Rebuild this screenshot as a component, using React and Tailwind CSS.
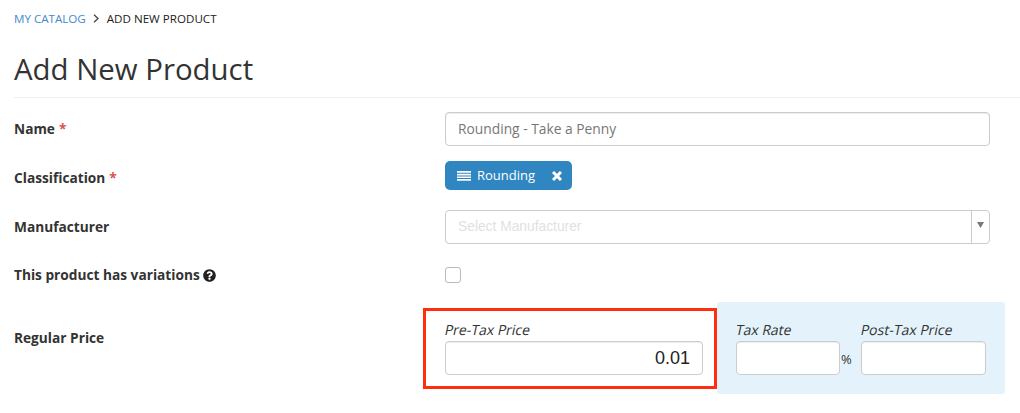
import { FaQuestionCircle } from 'react-icons/fa'

const labelClass = "w-[431px] shrink-0 text-[13.7px] font-bold text-[#333]"
const inputClass = "h-[34px] rounded-[4px] border border-[#ccc] bg-white shadow-[inset_0_1px_1px_rgba(0,0,0,0.075)]"
const captionClass = "w-fit -skew-x-12 text-sm leading-[22px] text-[#333]"

function Required() {
  return <span className="ml-1 text-[#d9534f]">*</span>
}

export default function App() {
  return (
    <div className="h-[413px] w-[1020px] overflow-hidden bg-white font-['Open_Sans',sans-serif] text-[#333]">
      <div className="flex h-[37px] items-center gap-[7px] pl-[14px] text-[11.6px]">
        <span className="text-[#428bca]">MY CATALOG</span>
        <svg width="6" height="9" viewBox="0 0 6 9" fill="none" stroke="#444" strokeWidth="1.3">
          <path d="M1 0.8 L5 4.5 L1 8.2" />
        </svg>
        <span className="ml-[1px] text-[#222]">ADD NEW PRODUCT</span>
      </div>

      <div className="ml-[14px] h-[61px] border-b border-[#eee] pt-[11px] text-[29.4px] leading-[42px]">
        Add New Product
      </div>

      <div className="pl-[14px] pt-[14px]">
        <div className="flex h-[34px] items-center">
          <div className={labelClass}>Name<Required /></div>
          <div className={`${inputClass} flex w-[545px] items-center px-3 text-[13.8px] text-[#777]`}>
            Rounding - Take a Penny
          </div>
        </div>

        <div className="mt-[15px] flex h-[29px] items-center">
          <div className={`${labelClass} pt-[5px]`}>Classification<Required /></div>
          <div className="flex h-[29px] w-[127px] items-center rounded-[5px] bg-[#2f86c0] pl-[12px] text-[13px] text-white">
            <svg width="14" height="10" viewBox="0 0 14 10" fill="currentColor">
              <path d="M0 0h14v1.7H0zM0 2.7h14v1.7H0zM0 5.4h14v1.7H0zM0 8.1h14v1.7H0z" />
            </svg>
            <span className="ml-[6px]">Rounding</span>
            <svg className="ml-[17px]" width="10" height="10" viewBox="0 0 10 10" fill="none" stroke="currentColor" strokeWidth="3">
              <path d="M1 1L9 9M9 1L1 9" />
            </svg>
          </div>
        </div>

        <div className="mt-[20px] flex h-[33px] items-center">
          <div className={`${labelClass} pt-[1px]`}>Manufacturer</div>
          <div className={`${inputClass} flex h-[33px] w-[545px] items-center font-['Liberation_Sans',sans-serif] shadow-none`}>
            <span className="flex-1 pl-3 pt-[1px] text-[13.8px] text-[#dfe1e3]">Select Manufacturer</span>
            <span className="flex h-full w-[18px] items-center justify-center border-l border-[#ccc] pb-[3px] pr-[1px]">
              <svg width="7" height="6" viewBox="0 0 7 6" fill="#777">
                <path d="M0 0h7L3.5 6z" />
              </svg>
            </span>
          </div>
        </div>

        <div className="mt-[24px] flex h-[16px] items-center">
          <div className={`${labelClass} flex items-center gap-[3px]`}>
            This product has variations
            <FaQuestionCircle className="h-[13px] w-[13px] text-[#222]" />
          </div>
          <div className="h-[16px] w-[16px] rounded-[3px] border border-[#bbb] bg-white" />
        </div>

        <div className="mt-[19px] flex items-center">
          <div className="w-[409px] shrink-0 pb-[20px] text-[13.7px] font-bold text-[#333]">Regular Price</div>
          <div className="h-[81px] w-[294px] border-[3px] border-[#ff2e0f] pl-[19px] pt-[8px]">
            <div className={captionClass}>Pre-Tax Price</div>
            <div className={`${inputClass} flex w-[258px] items-center justify-end pr-[12px] font-['Liberation_Sans',sans-serif] text-lg text-[#222]`}>
              0.01
            </div>
          </div>
          <div className="flex h-[92px] w-[288px] items-start rounded-[3px] bg-[#e4f3fb] pl-[19px] pt-[17px]">
            <div>
              <div className={captionClass}>Tax Rate</div>
              <div className="flex w-[125px] items-center">
                <div className={`${inputClass} w-[104px]`} />
                <span className="ml-[1px] pt-[3px] text-[13px]">%</span>
              </div>
            </div>
            <div>
              <div className={captionClass}>Post-Tax Price</div>
              <div className={`${inputClass} w-[125px]`} />
            </div>
          </div>
        </div>
      </div>
    </div>
  )
}
